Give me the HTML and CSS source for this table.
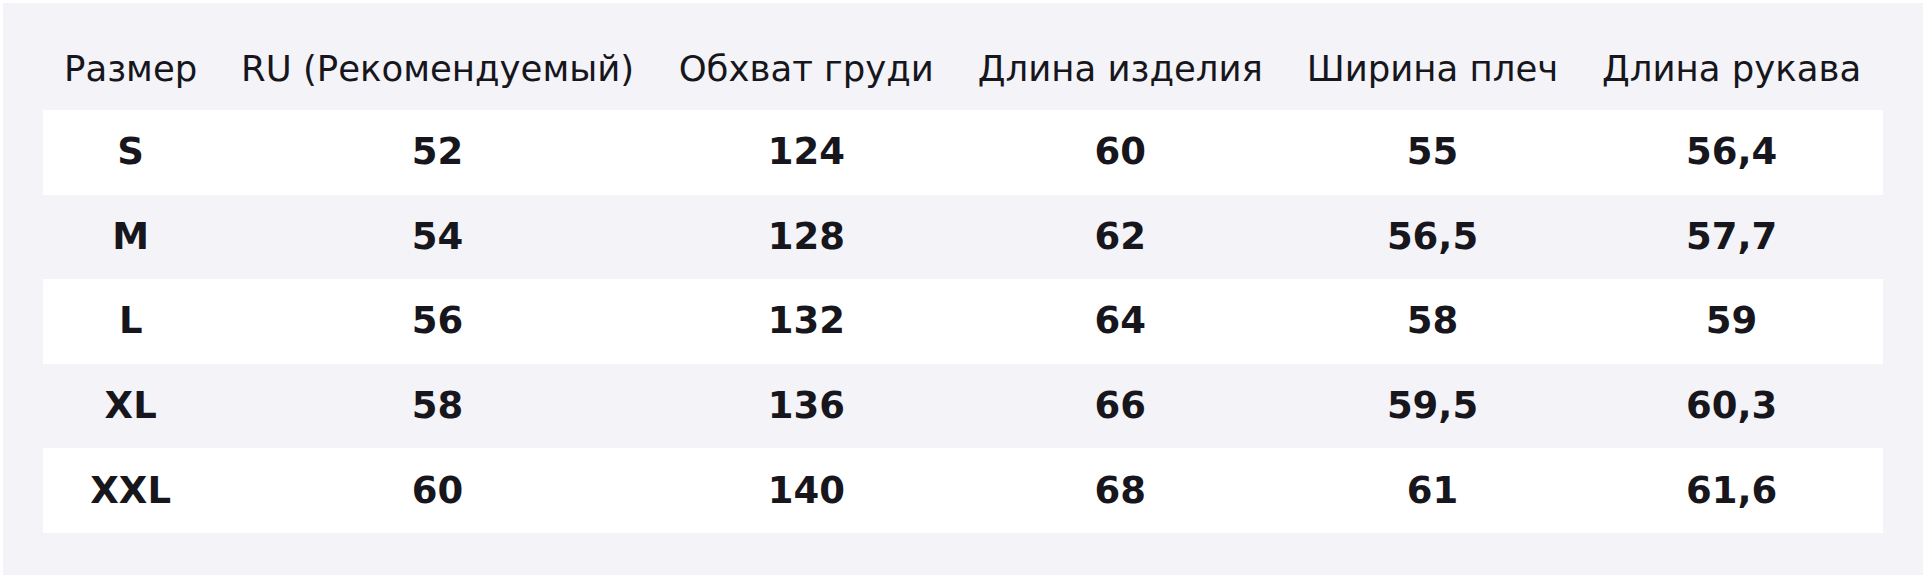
FILE: index.html
```html
<!DOCTYPE html>
<html lang="ru">
<head>
<meta charset="utf-8">
<title>Таблица размеров</title>
<link rel="stylesheet" href="styles.css">
</head>
<body>
<div class="card">
  <table class="sizes">
    <thead>
      <tr>
        <th>Размер</th>
        <th>RU (Рекомендуемый)</th>
        <th>Обхват груди</th>
        <th>Длина изделия</th>
        <th>Ширина плеч</th>
        <th>Длина рукава</th>
      </tr>
    </thead>
    <tbody>
      <tr class="odd"><td>S</td><td>52</td><td>124</td><td>60</td><td>55</td><td>56,4</td></tr>
      <tr><td>M</td><td>54</td><td>128</td><td>62</td><td>56,5</td><td>57,7</td></tr>
      <tr class="odd"><td>L</td><td>56</td><td>132</td><td>64</td><td>58</td><td>59</td></tr>
      <tr><td>XL</td><td>58</td><td>136</td><td>66</td><td>59,5</td><td>60,3</td></tr>
      <tr class="odd"><td>XXL</td><td>60</td><td>140</td><td>68</td><td>61</td><td>61,6</td></tr>
    </tbody>
  </table>
</div>
</body>
</html>
```
FILE: styles.css
```css
html, body {
  margin: 0;
  background: #ffffff;
}
body {
  padding: 3px;
  font-family: "DejaVu Sans", sans-serif;
  color: #16161c;
}
.card {
  background: #f4f3f8;
  height: 572px;
  box-sizing: border-box;
  padding: 0 40px;
}
.sizes {
  width: 100%;
  border-collapse: collapse;
  border-spacing: 0;
}
.sizes th {
  font-weight: normal;
  font-size: 35.5px;
  height: 107px;
  box-sizing: border-box;
  padding: 0 20px 20px;
  vertical-align: bottom;
  text-align: center;
  white-space: nowrap;
  line-height: 42px;
}
.sizes td {
  font-weight: bold;
  font-size: 37px;
  height: 84.6px;
  padding: 0 20px;
  text-align: center;
  vertical-align: middle;
  line-height: 42px;
}
.sizes tr.odd td {
  background: #ffffff;
}
```
